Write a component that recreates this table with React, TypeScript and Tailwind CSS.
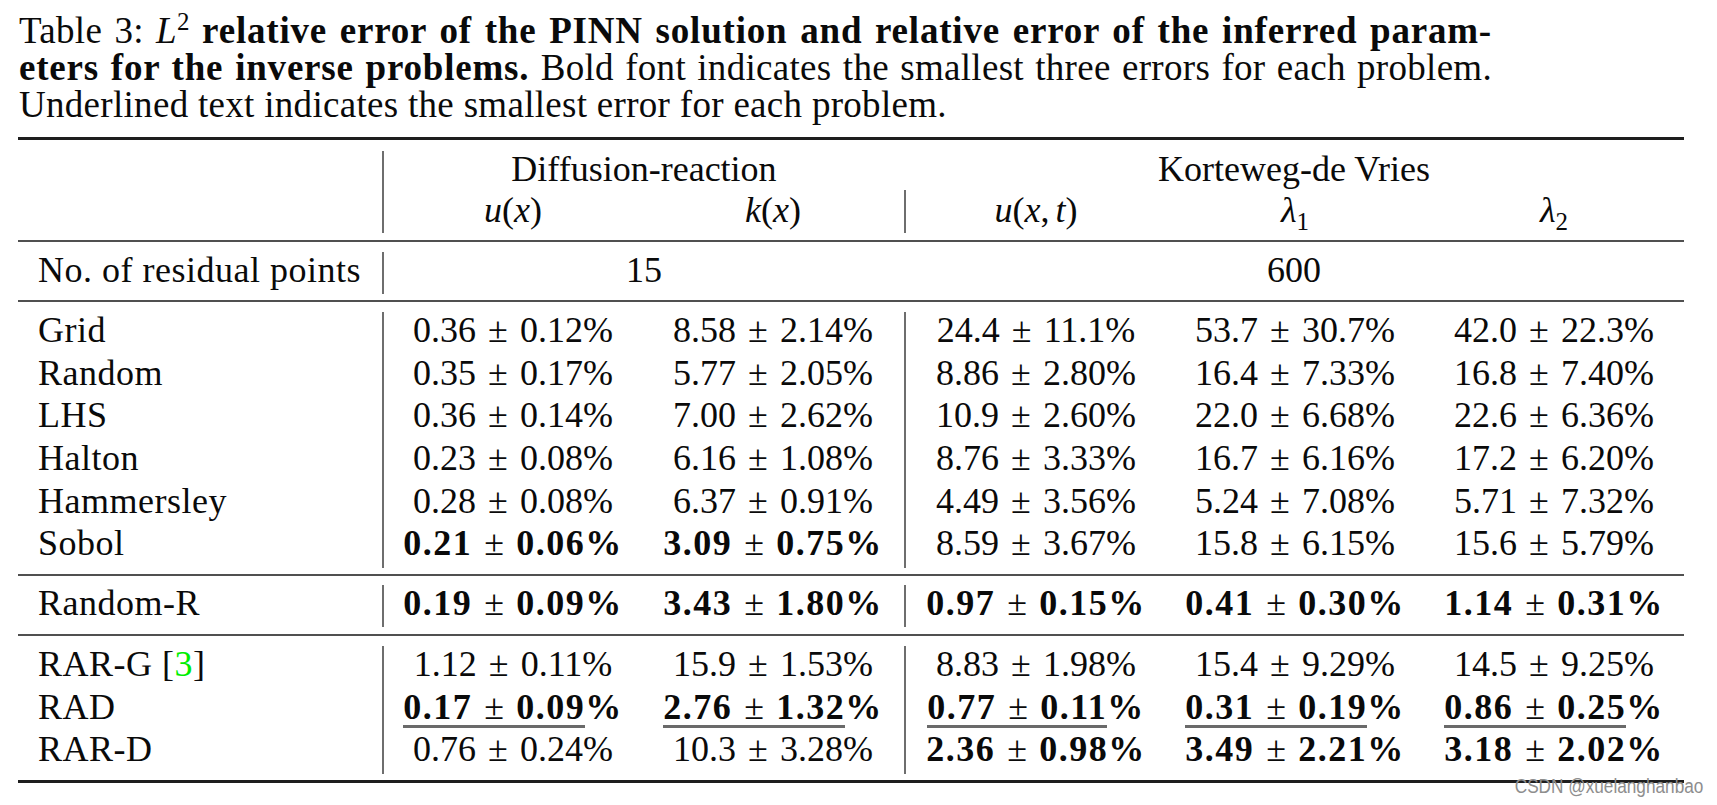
import React from "react";

type Cell = { a: string; b: string; bold?: boolean; ul?: boolean };

const GRID = "grid grid-cols-[364px_260px_262px_262px_258px_260px]";
const BAR = "border-l-2 border-[#6e6e6e]";

function Pm() {
  return (
    <span className="inline-block w-[28px] mx-[8px] text-center font-normal tracking-normal">±</span>
  );
}

function Val({ c }: { c: Cell }) {
  const num = c.bold ? "font-bold tracking-[1.5px]" : "";
  const inner = (
    <>
      <span className={num}>{c.a}</span>
      <Pm />
      <span className={num}>{c.b}</span>
    </>
  );
  return (
    <span className="whitespace-nowrap">
      {c.ul ? (
        <span className="inline-block border-b-[3px] border-[#6a6a6a]">{inner}</span>
      ) : (
        inner
      )}
      <span className={num}>%</span>
    </span>
  );
}

function Rule({ heavy }: { heavy?: boolean }) {
  return <div className={heavy ? "h-[3px] bg-[#1e1e1e]" : "h-[2px] bg-[#505050]"} />;
}

function DataRow({ label, cells }: { label: React.ReactNode; cells: Cell[] }) {
  return (
    <div className={`${GRID} h-[42.7px] leading-[36px]`}>
      <div className="pl-[20px] tracking-[0.5px] whitespace-nowrap">{label}</div>
      <div className={`${BAR} text-center`}>
        <Val c={cells[0]} />
      </div>
      <div className="text-center">
        <Val c={cells[1]} />
      </div>
      <div className={`${BAR} text-center`}>
        <Val c={cells[2]} />
      </div>
      <div className="text-center">
        <Val c={cells[3]} />
      </div>
      <div className="text-center">
        <Val c={cells[4]} />
      </div>
    </div>
  );
}

const n = (a: string, b: string): Cell => ({ a, b });
const B = (a: string, b: string): Cell => ({ a, b, bold: true });
const U = (a: string, b: string): Cell => ({ a, b, bold: true, ul: true });

const sampling: [string, Cell[]][] = [
  ["Grid", [n("0.36", "0.12"), n("8.58", "2.14"), n("24.4", "11.1"), n("53.7", "30.7"), n("42.0", "22.3")]],
  ["Random", [n("0.35", "0.17"), n("5.77", "2.05"), n("8.86", "2.80"), n("16.4", "7.33"), n("16.8", "7.40")]],
  ["LHS", [n("0.36", "0.14"), n("7.00", "2.62"), n("10.9", "2.60"), n("22.0", "6.68"), n("22.6", "6.36")]],
  ["Halton", [n("0.23", "0.08"), n("6.16", "1.08"), n("8.76", "3.33"), n("16.7", "6.16"), n("17.2", "6.20")]],
  ["Hammersley", [n("0.28", "0.08"), n("6.37", "0.91"), n("4.49", "3.56"), n("5.24", "7.08"), n("5.71", "7.32")]],
  ["Sobol", [B("0.21", "0.06"), B("3.09", "0.75"), n("8.59", "3.67"), n("15.8", "6.15"), n("15.6", "5.79")]],
];

const randomR: Cell[] = [B("0.19", "0.09"), B("3.43", "1.80"), B("0.97", "0.15"), B("0.41", "0.30"), B("1.14", "0.31")];

const adaptive: [React.ReactNode, Cell[]][] = [
  [
    <span>
      RAR-G [<span className="text-[#00ee00]">3</span>]
    </span>,
    [n("1.12", "0.11"), n("15.9", "1.53"), n("8.83", "1.98"), n("15.4", "9.29"), n("14.5", "9.25")],
  ],
  ["RAD", [U("0.17", "0.09"), U("2.76", "1.32"), U("0.77", "0.11"), U("0.31", "0.19"), U("0.86", "0.25")]],
  ["RAR-D", [n("0.76", "0.24"), n("10.3", "3.28"), B("2.36", "0.98"), B("3.49", "2.21"), B("3.18", "2.02")]],
];

function Sub({ children }: { children: React.ReactNode }) {
  return <span className="text-[25px] align-sub leading-[0] not-italic">{children}</span>;
}

export default function App() {
  return (
    <div className="relative w-[1717px] h-[805px] bg-white text-[#0a0a0a] overflow-hidden font-['Liberation_Serif',serif]">
      <div className="pl-[18px] pt-[12px]">
        {/* Caption */}
        <div className="pl-[1px] text-[37px] leading-[37px] tracking-[0.3px]">
          <div className="w-[1473px] whitespace-nowrap text-justify [text-align-last:justify]">
            Table 3: <i>L</i>
            <span className="text-[25px] align-super leading-[0]">2</span>{" "}
            <b className="tracking-[0.8px]">
              relative error of the PINN solution and relative error of the inferred param-
            </b>
          </div>
          <div className="w-[1473px] whitespace-nowrap text-justify [text-align-last:justify]">
            <b className="tracking-[0.8px]">eters for the inverse problems.</b> Bold font indicates the smallest
            three errors for each problem.
          </div>
          <div className="whitespace-nowrap">Underlined text indicates the smallest error for each problem.</div>
        </div>

        {/* Table */}
        <div className="mt-[14px] w-[1666px] text-[36px]">
          <Rule heavy />
          <div className="h-[9px]" />
          <div className={`${GRID} h-[41px] leading-[36px] pt-[2px]`}>
            <div />
            <div className={`${BAR} col-span-2 text-center`}>Diffusion-reaction</div>
            <div className="col-span-3 text-center">Korteweg-de Vries</div>
          </div>
          <div className={`${GRID} h-[43px] leading-[36px]`}>
            <div />
            <div className={`${BAR} text-center pt-[2px]`}>
              <i>u</i>(<i>x</i>)
            </div>
            <div className="text-center pt-[2px]">
              <i>k</i>(<i>x</i>)
            </div>
            <div className={`${BAR} text-center pt-[2px]`}>
              <i>u</i>(<i>x</i>,<span className="inline-block w-[6px]" />
              <i>t</i>)
            </div>
            <div className="text-center pt-[2px]">
              <i>λ</i>
              <Sub>1</Sub>
            </div>
            <div className="text-center pt-[2px]">
              <i>λ</i>
              <Sub>2</Sub>
            </div>
          </div>
          <div className="h-[7px]" />
          <Rule />
          <div className="h-[10px]" />
          <div className={`${GRID} h-[42px] leading-[36px]`}>
            <div className="pl-[20px] tracking-[0.5px] whitespace-nowrap">No. of residual points</div>
            <div className={`${BAR} col-span-2 text-center`}>15</div>
            <div className="col-span-3 text-center">600</div>
          </div>
          <div className="h-[6px]" />
          <Rule />
          <div className="h-[10px]" />
          {sampling.map(([label, cells]) => (
            <DataRow key={label} label={label} cells={cells} />
          ))}
          <div className="h-[5.8px]" />
          <Rule />
          <div className="h-[9px]" />
          <div className={`${GRID} h-[42px] leading-[36px]`}>
            <div className="pl-[20px] tracking-[0.5px] whitespace-nowrap">Random-R</div>
            <div className={`${BAR} text-center`}>
              <Val c={randomR[0]} />
            </div>
            <div className="text-center">
              <Val c={randomR[1]} />
            </div>
            <div className={`${BAR} text-center`}>
              <Val c={randomR[2]} />
            </div>
            <div className="text-center">
              <Val c={randomR[3]} />
            </div>
            <div className="text-center">
              <Val c={randomR[4]} />
            </div>
          </div>
          <div className="h-[7px]" />
          <Rule />
          <div className="h-[10px]" />
          {adaptive.map(([label, cells], i) => (
            <DataRow key={i} label={label} cells={cells} />
          ))}
          <div className="h-[6px]" />
          <Rule heavy />
        </div>
      </div>

      <div className="absolute right-[14px] top-[774px] text-[20px] leading-[24px] text-[#8e8e8e] font-['Liberation_Sans',sans-serif] whitespace-nowrap origin-right scale-x-[0.86]">
        CSDN @xuelanghanbao
      </div>
    </div>
  );
}
